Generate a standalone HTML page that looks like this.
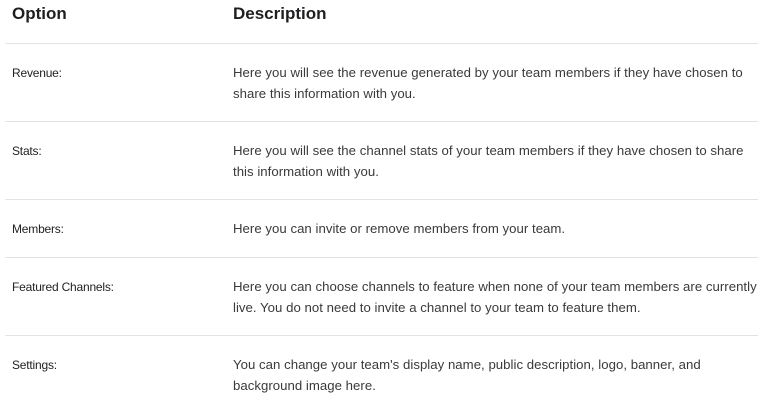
<!DOCTYPE html>
<html><head><meta charset="utf-8"><style>
body{margin:0;width:768px;height:408px;background:#fff;position:relative;overflow:hidden;font-family:"Liberation Sans",sans-serif;color:#333}
.h{position:absolute;top:4px;font-size:17px;font-weight:bold;color:#1f1f23}
.l{position:absolute;left:5px;width:753px;height:1px;background:#e3e3e3}
.o{position:absolute;left:12px;font-size:12px;color:#222;letter-spacing:-0.2px}
.d{position:absolute;left:233px;font-size:13.2px;line-height:21px;color:#3a3a3a;white-space:nowrap;letter-spacing:0.03px}
</style></head><body>
<div class="h" style="left:12px">Option</div>
<div class="h" style="left:233px">Description</div>
<div class="l" style="top:43px"></div>
<div class="o" style="top:66px">Revenue:</div>
<div class="d" style="top:62px">Here you will see the revenue generated by your team members if they have chosen to<br>share this information with you.</div>
<div class="l" style="top:121px"></div>
<div class="o" style="top:144px">Stats:</div>
<div class="d" style="top:140px">Here you will see the channel stats of your team members if they have chosen to share<br>this information with you.</div>
<div class="l" style="top:199px"></div>
<div class="o" style="top:222px">Members:</div>
<div class="d" style="top:218px">Here you can invite or remove members from your team.</div>
<div class="l" style="top:257px"></div>
<div class="o" style="top:280px">Featured Channels:</div>
<div class="d" style="top:276px">Here you can choose channels to feature when none of your team members are currently<br>live. You do not need to invite a channel to your team to feature them.</div>
<div class="l" style="top:335px"></div>
<div class="o" style="top:358px">Settings:</div>
<div class="d" style="top:354px">You can change your team's display name, public description, logo, banner, and<br>background image here.</div>
</body></html>
